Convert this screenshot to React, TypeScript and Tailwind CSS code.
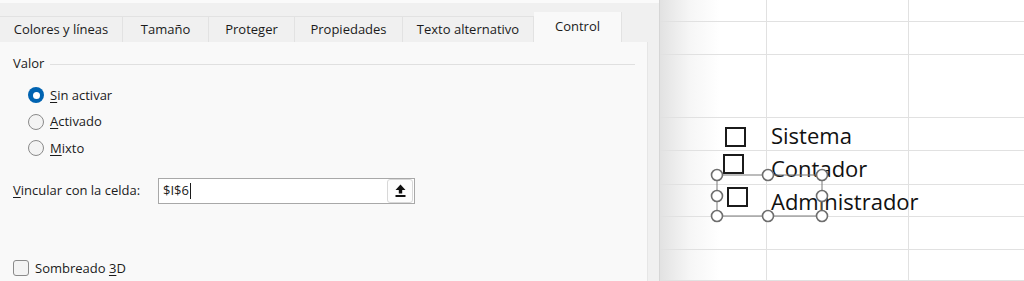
import React from 'react';

const tabs = [
  { label: 'Colores y líneas', w: 'w-[123px]' },
  { label: 'Tamaño', w: 'w-[86px]' },
  { label: 'Proteger', w: 'w-[86px]' },
  { label: 'Propiedades', w: 'w-[108px]' },
  { label: 'Texto alternativo', w: 'w-[131px]' },
];

const rowHeights = ['h-[22px]', 'h-[33px]', 'h-[63px]', 'h-[33px]', 'h-[34px]', 'h-[32px]', 'h-[33px]', 'h-[31px]'];

const Radio: React.FC<{ checked?: boolean; children: React.ReactNode }> = ({ checked, children }) => (
  <div className="flex items-center h-[26.5px] pl-[28px]">
    {checked ? (
      <span className="w-[16px] h-[16px] rounded-full bg-[#0063b1] flex items-center justify-center">
        <span className="w-[7px] h-[7px] rounded-full bg-white" />
      </span>
    ) : (
      <span className="w-[16px] h-[16px] rounded-full border border-[#8a8a8a] bg-[#f3f3f3]" />
    )}
    <span className="ml-[6px]">{children}</span>
  </div>
);

const SheetBox: React.FC<{ className: string }> = ({ className }) => (
  <div className={`absolute border-2 border-[#1b1b1b] ${className}`} />
);

export default function App() {
  const handles = [
    [717, 175], [768, 175], [822, 175],
    [717, 196], [822, 196],
    [717, 216], [768, 216], [822, 216],
  ];

  return (
    <div className="w-[1024px] h-[281px] overflow-hidden flex bg-white text-[#1b1b1b] font-['Open_Sans',sans-serif] text-[13px]">
      {/* dialog */}
      <div className="w-[660px] shrink-0 flex flex-col bg-[#f0f0f0] border-r border-[#d6d6d6]">
        <div className="h-[3px] shrink-0 bg-[#fafafa]" />
        <div className="flex h-[39px] shrink-0 items-end">
          {tabs.map((t) => (
            <div
              key={t.label}
              className={`${t.w} h-[26px] flex items-center justify-center border-t border-r border-[#e2e2e2] bg-[#f0f0f0]`}
            >
              {t.label}
            </div>
          ))}
          <div className="w-[88px] h-[30px] flex items-center justify-center bg-[#f9f9f9] border-r border-[#e2e2e2] pb-[1px]">
            Control
          </div>
        </div>
        <div className="w-[648px] flex-1 min-h-0 bg-[#f9f9f9] border-r border-[#e6e6e6] flex flex-col">
          <div className="flex items-center mt-[12px] h-[20px] pl-[13px] pr-[12px]">
            <span>Valor</span>
            <span className="flex-1 ml-[6px] h-px bg-[#e0e0e0]" />
          </div>
          <div className="mt-[8px] flex flex-col">
            <Radio checked>
              <u className="underline-offset-2">S</u>in activar
            </Radio>
            <Radio>
              <u className="underline-offset-2">A</u>ctivado
            </Radio>
            <Radio>
              <u className="underline-offset-2">M</u>ixto
            </Radio>
          </div>
          <div className="flex items-center mt-[16px] pl-[13px]">
            <span className="w-[145px]">
              <u className="underline-offset-2">V</u>incular con la celda:
            </span>
            <div className="w-[257px] h-[26px] bg-white border border-[#a8a8a8] flex items-center pl-[4px] pr-px">
              <span>$I$6</span>
              <span className="w-px h-[16px] bg-[#1b1b1b] ml-px" />
              <span className="flex-1" />
              <button className="w-[26px] h-[24px] rounded-[3px] border border-[#d8d8d8] bg-[#fdfdfd] flex items-center justify-center">
                <svg width="11" height="13" viewBox="0 0 11 13">
                  <path d="M5.5 0.5 L10.5 6 H7.2 V9.5 H3.8 V6 H0.5 Z" fill="#111" />
                  <rect x="0.5" y="11" width="10" height="2" fill="#111" />
                </svg>
              </button>
            </div>
          </div>
          <div className="flex items-center mt-[55px] pl-[13px]">
            <span className="w-[16px] h-[16px] rounded-[3px] border border-[#8a8a8a] bg-[#f3f3f3]" />
            <span className="ml-[6px]">
              Sombreado <u className="underline-offset-2">3</u>D
            </span>
          </div>
        </div>
      </div>

      {/* sheet */}
      <div className="flex-1 relative bg-[linear-gradient(to_right,#e2e2e2,#f6f6f6_30px,#ffffff_60px)]">
        <div className="flex flex-col">
          {rowHeights.map((h, i) => (
            <div key={i} className={`flex ${h} border-b border-[#e1e1e1]`}>
              <div className="w-[107px] border-r border-[#e1e1e1]" />
              <div className="w-[142px] border-r border-[#e1e1e1]" />
              <div className="flex-1" />
            </div>
          ))}
        </div>

        <SheetBox className="left-[65px] top-[127px] w-[21px] h-[20px]" />
        <SheetBox className="left-[63px] top-[154px] w-[21px] h-[20px]" />
        <SheetBox className="left-[67px] top-[187px] w-[21px] h-[20px]" />

        <div className="absolute left-[111px] top-[120px] text-[22px] leading-[30px] text-[#111]">Sistema</div>
        <div className="absolute left-[111px] top-[153px] text-[22px] leading-[30px] text-[#111]">Contador</div>
        <div className="absolute left-[111px] top-[186px] text-[22px] leading-[30px] text-[#111]">Administrador</div>

        <svg className="absolute left-0 top-0" width="364" height="281">
          <rect x={717 - 660} y={175} width={105} height={41} fill="none" stroke="#7a7a7a" strokeWidth="1" />
          {handles.map(([x, y], i) => (
            <circle key={i} cx={x - 660} cy={y} r="5.5" fill="#fff" stroke="#6e6e6e" strokeWidth="1.6" />
          ))}
        </svg>
      </div>
    </div>
  );
}
